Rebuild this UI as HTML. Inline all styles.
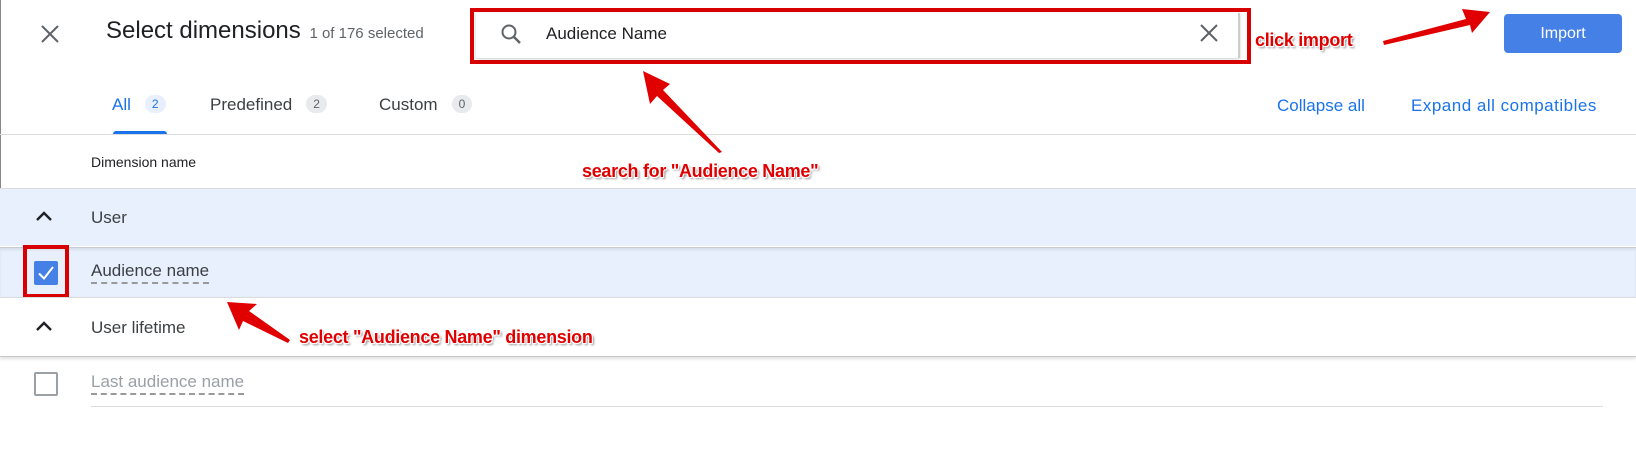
<!DOCTYPE html>
<html><head><meta charset="utf-8"><style>
*{margin:0;padding:0;box-sizing:border-box}
body{width:1636px;height:459px;overflow:hidden;background:#fff;font-family:"Liberation Sans",Arial,sans-serif;color:#3c4043;position:relative}
.a{position:absolute;white-space:nowrap}
.badge{display:inline-block;background:#e8eaed;border-radius:9px;font-size:12px;padding:2px 7px;color:#5f6368;margin-left:14px;vertical-align:2px}
.ann{position:absolute;white-space:nowrap;color:#e00000;font-weight:bold;font-size:18px;letter-spacing:-0.3px;text-shadow:1px 1px 0 #fff,-1px -1px 0 #fff,1px -1px 0 #fff,-1px 1px 0 #fff,2px 2px 2px #888}
</style></head><body>
<div class="a" style="left:0;top:0;width:1px;height:200px;background:#888"></div>
<svg class="a" style="left:40px;top:24px" width="20" height="20" viewBox="0 0 20 20"><path d="M2 2L18 18M18 2L2 18" stroke="#5f6368" stroke-width="2"/></svg>
<div class="a" style="left:106px;top:17px;font-size:24px;color:#202124">Select dimensions <span style="font-size:15px;color:#5f6368;margin-left:2px">1 of 176 selected</span></div>

<div class="a" style="left:470px;top:8px;width:781px;height:56px;border:4px solid #d80000"></div>
<div class="a" style="left:476px;top:13px;width:764px;height:45px;border-right:2px solid #ccc;box-shadow:0 1px 3px rgba(0,0,0,.2)"></div>
<svg class="a" style="left:499px;top:22px" width="24" height="24" viewBox="0 0 24 24"><circle cx="10" cy="10" r="6.5" stroke="#5f6368" stroke-width="2" fill="none"/><path d="M15 15L21 21" stroke="#5f6368" stroke-width="2.4"/></svg>
<div class="a" style="left:546px;top:24px;font-size:17px;color:#202124">Audience Name</div>
<svg class="a" style="left:1200px;top:24px" width="18" height="18" viewBox="0 0 18 18"><path d="M1 1L17 17M17 1L1 17" stroke="#5f6368" stroke-width="2"/></svg>

<div class="ann" style="left:1255px;top:30px">click import</div>
<div class="a" style="left:1504px;top:14px;width:118px;height:39px;background:#4480e6;border-radius:4px;color:#fff;font-size:16px;text-align:center;line-height:39px">Import</div>

<div class="a" style="left:112px;top:95px;font-size:17px;color:#1a73e8">All<span class="badge" style="background:#e8f0fe;color:#1a73e8">2</span></div>
<div class="a" style="left:113px;top:131px;width:54px;height:4px;background:#1a73e8;border-radius:3px 3px 0 0"></div>
<div class="a" style="left:210px;top:95px;font-size:17px">Predefined<span class="badge">2</span></div>
<div class="a" style="left:379px;top:95px;font-size:17px">Custom<span class="badge">0</span></div>
<div class="a" style="left:1277px;top:96px;font-size:17px;color:#1a73e8">Collapse all</div>
<div class="a" style="left:1411px;top:96px;font-size:17px;color:#1a73e8;letter-spacing:0.5px">Expand all compatibles</div>
<div class="a" style="left:0;top:134px;width:1636px;height:1px;background:#dadce0"></div>

<div class="a" style="left:91px;top:154px;font-size:14px;color:#202124">Dimension name</div>

<div class="a" style="left:0;top:188px;width:1636px;height:58px;background:#e8f0fe;border-top:1px solid #dadce0"></div>
<svg class="a" style="left:35px;top:210px" width="18" height="12" viewBox="0 0 18 12"><path d="M2 10L9 3L16 10" stroke="#202124" stroke-width="2.4" fill="none"/></svg>
<div class="a" style="left:91px;top:208px;font-size:17px">User</div>

<div class="a" style="left:0;top:247px;width:1636px;height:50px;background:#e8f0fe;border-top:1px solid #c8ccd2;box-shadow:inset 0 2px 2px rgba(0,0,0,.08)"></div>
<div class="a" style="left:23px;top:245px;width:46px;height:53px;border:4px solid #d80000"></div>
<div class="a" style="left:34px;top:261px;width:24px;height:24px;background:#4480e6;border-radius:2px"></div>
<svg class="a" style="left:34px;top:261px" width="24" height="24" viewBox="0 0 24 24"><path d="M5 12.5L10 17.5L19 6" stroke="#fff" stroke-width="2" fill="none"/></svg>
<div class="a" style="left:91px;top:261px;font-size:17px;border-bottom:2px dashed #999;padding-bottom:1px">Audience name</div>

<div class="a" style="left:0;top:297px;width:1636px;height:60px;border-top:1px solid #dadce0;border-bottom:1px solid #c8c8c8;box-shadow:0 2px 3px rgba(0,0,0,.12)"></div>
<svg class="a" style="left:35px;top:320px" width="18" height="12" viewBox="0 0 18 12"><path d="M2 10L9 3L16 10" stroke="#202124" stroke-width="2.4" fill="none"/></svg>
<div class="a" style="left:91px;top:318px;font-size:17px">User lifetime</div>
<div class="ann" style="left:299px;top:327px">select "Audience Name" dimension</div>

<div class="a" style="left:34px;top:372px;width:24px;height:24px;border:2px solid #9aa0a6;border-radius:2px"></div>
<div class="a" style="left:91px;top:372px;font-size:17px;color:#9aa0a6;border-bottom:2px dashed #999;padding-bottom:1px">Last audience name</div>
<div class="a" style="left:91px;top:406px;width:1512px;height:1px;background:#dadce0"></div>

<div class="ann" style="left:582px;top:161px">search for "Audience Name"</div>

<svg class="a" style="left:0;top:0" width="1636" height="459" viewBox="0 0 1636 459">
<g fill="#e00000">
<polygon points="722,152 719,153 657,96 650,104 643,71 670,84 663,90"/>
<polygon points="1384,45 1383,41 1466,19 1462,9 1490,12 1472,33 1470,25"/>
<polygon points="290,340 288,343 243,321 239,330 227,302 257,304 249,311"/>
</g></svg>
</body></html>
